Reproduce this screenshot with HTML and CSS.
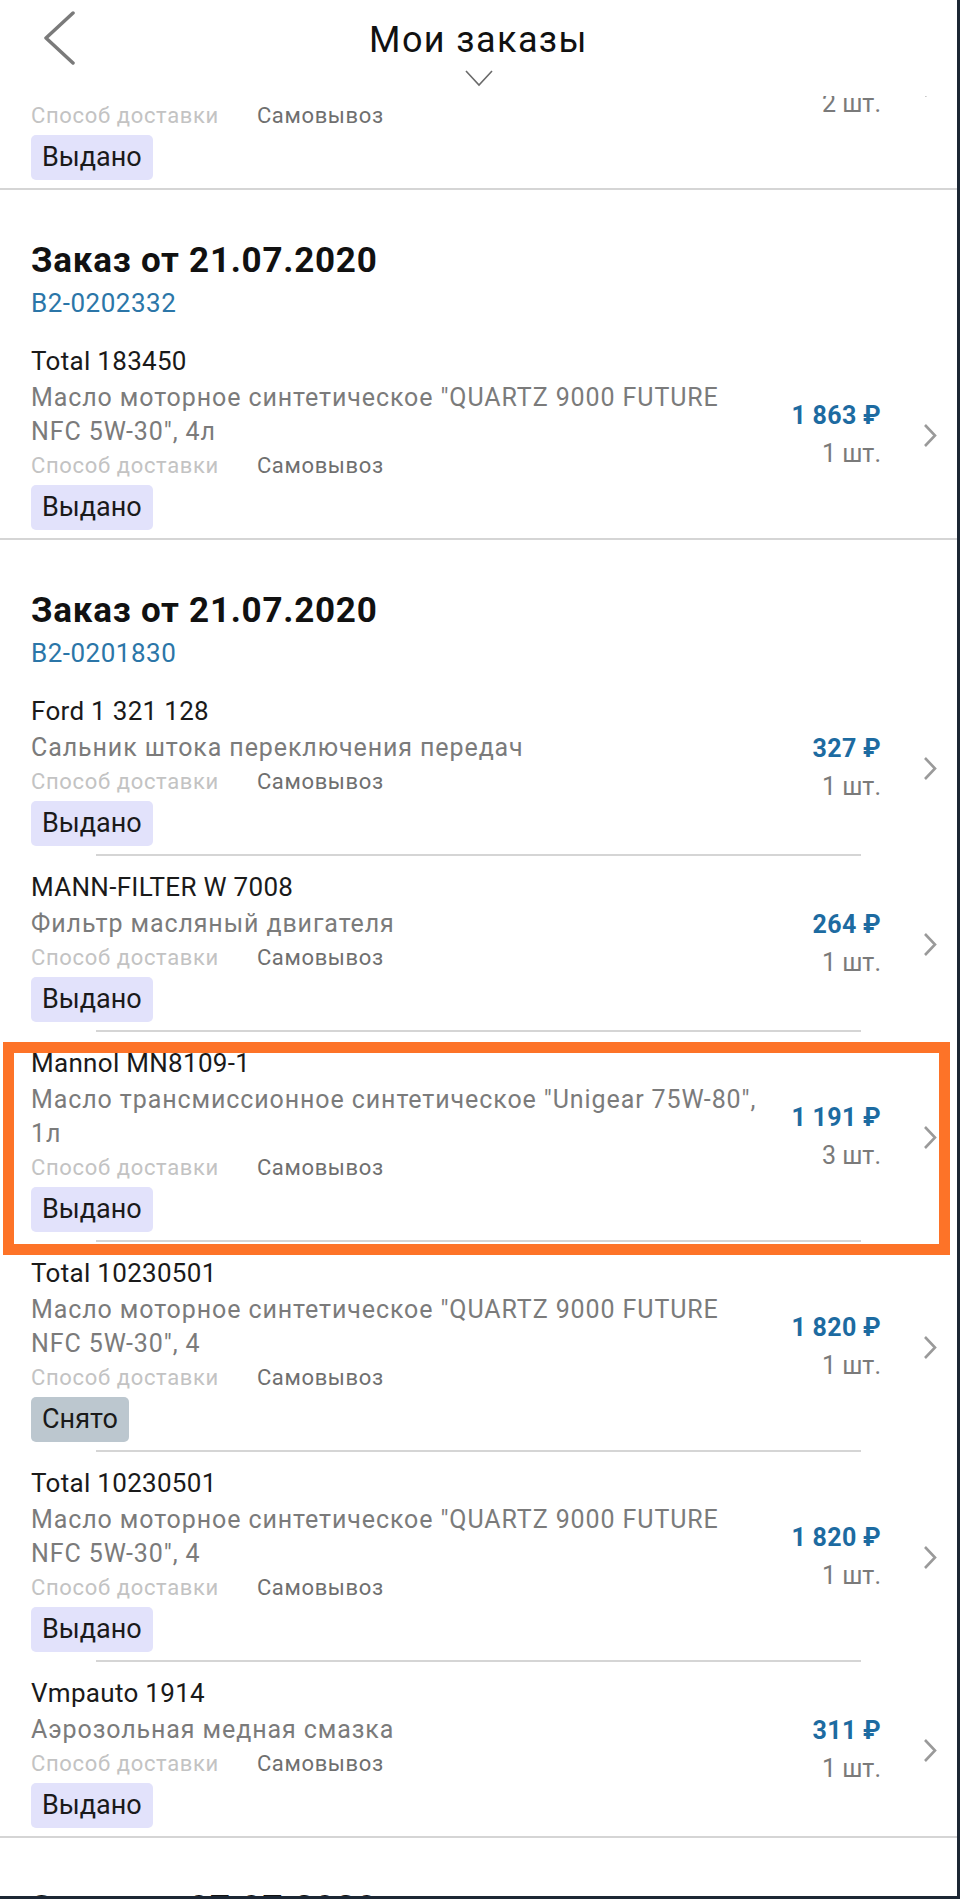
FILE: index.html
```html
<!DOCTYPE html>
<html lang="ru">
<head>
<meta charset="UTF-8">
<title>Мои заказы</title>
<link rel="stylesheet" href="styles.css">
</head>
<body>
<div class="screen">

<header class="topbar">
  <svg class="back" width="31" height="54" viewBox="0 0 31 54"><path d="M29 2 L2 27 L29 52" fill="none" stroke="#7a7a7a" stroke-width="3.5" stroke-linecap="round" stroke-linejoin="round"/></svg>
  <div class="topbar-center">
    <div class="title">Мои заказы</div>
    <svg class="expand" width="30" height="18" viewBox="0 0 30 18"><path d="M2 2 L15 16 L28 2" fill="none" stroke="#6a6a6a" stroke-width="1.6"/></svg>
  </div>
  <div></div>
</header>

<main class="list">
<div class="list-scroll">

<!-- list is scrolled: the top of this order is out of view -->
<section class="order order-cut">
  <div class="item">
    <div class="item-main">
      <div class="item-name">Total 10230501</div>
      <div class="item-desc">Масло моторное синтетическое "QUARTZ 9000 FUTURE NFC 5W-30", 4</div>
      <div class="delivery"><span class="delivery-label">Способ доставки</span><span class="delivery-value">Самовывоз</span></div>
      <span class="badge">Выдано</span>
    </div>
    <div class="item-side">
      <div class="price">3 640 ₽</div>
      <div class="qty">2 шт.</div>
    </div>
    <svg class="chev" width="14" height="25" viewBox="0 0 14 25"><path d="M2 2 L12 12.5 L2 23" fill="none" stroke="#9a9a9a" stroke-width="2.6"/></svg>
  </div>
</section>

<section class="order">
  <h2 class="order-title">Заказ от 21.07.2020</h2>
  <div class="order-num">B2-0202332</div>
  <div class="item">
    <div class="item-main">
      <div class="item-name">Total 183450</div>
      <div class="item-desc">Масло моторное синтетическое "QUARTZ 9000 FUTURE NFC 5W-30", 4л</div>
      <div class="delivery"><span class="delivery-label">Способ доставки</span><span class="delivery-value">Самовывоз</span></div>
      <span class="badge">Выдано</span>
    </div>
    <div class="item-side">
      <div class="price">1 863 ₽</div>
      <div class="qty">1 шт.</div>
    </div>
    <svg class="chev" width="14" height="25" viewBox="0 0 14 25"><path d="M2 2 L12 12.5 L2 23" fill="none" stroke="#9a9a9a" stroke-width="2.6"/></svg>
  </div>
</section>

<section class="order">
  <h2 class="order-title">Заказ от 21.07.2020</h2>
  <div class="order-num">B2-0201830</div>

  <div class="item">
    <div class="item-main">
      <div class="item-name">Ford 1 321 128</div>
      <div class="item-desc">Сальник штока переключения передач</div>
      <div class="delivery"><span class="delivery-label">Способ доставки</span><span class="delivery-value">Самовывоз</span></div>
      <span class="badge">Выдано</span>
    </div>
    <div class="item-side">
      <div class="price">327 ₽</div>
      <div class="qty">1 шт.</div>
    </div>
    <svg class="chev" width="14" height="25" viewBox="0 0 14 25"><path d="M2 2 L12 12.5 L2 23" fill="none" stroke="#9a9a9a" stroke-width="2.6"/></svg>
  </div>
  <hr class="divider">

  <div class="item">
    <div class="item-main">
      <div class="item-name">MANN-FILTER W 7008</div>
      <div class="item-desc">Фильтр масляный двигателя</div>
      <div class="delivery"><span class="delivery-label">Способ доставки</span><span class="delivery-value">Самовывоз</span></div>
      <span class="badge">Выдано</span>
    </div>
    <div class="item-side">
      <div class="price">264 ₽</div>
      <div class="qty">1 шт.</div>
    </div>
    <svg class="chev" width="14" height="25" viewBox="0 0 14 25"><path d="M2 2 L12 12.5 L2 23" fill="none" stroke="#9a9a9a" stroke-width="2.6"/></svg>
  </div>
  <hr class="divider">

  <div class="item marked">
    <div class="item-main">
      <div class="item-name">Mannol MN8109-1</div>
      <div class="item-desc">Масло трансмиссионное синтетическое "Unigear 75W-80", 1л</div>
      <div class="delivery"><span class="delivery-label">Способ доставки</span><span class="delivery-value">Самовывоз</span></div>
      <span class="badge">Выдано</span>
    </div>
    <div class="item-side">
      <div class="price">1 191 ₽</div>
      <div class="qty">3 шт.</div>
    </div>
    <svg class="chev" width="14" height="25" viewBox="0 0 14 25"><path d="M2 2 L12 12.5 L2 23" fill="none" stroke="#9a9a9a" stroke-width="2.6"/></svg>
  </div>
  <hr class="divider">

  <div class="item">
    <div class="item-main">
      <div class="item-name">Total 10230501</div>
      <div class="item-desc">Масло моторное синтетическое "QUARTZ 9000 FUTURE NFC 5W-30", 4</div>
      <div class="delivery"><span class="delivery-label">Способ доставки</span><span class="delivery-value">Самовывоз</span></div>
      <span class="badge badge-off">Снято</span>
    </div>
    <div class="item-side">
      <div class="price">1 820 ₽</div>
      <div class="qty">1 шт.</div>
    </div>
    <svg class="chev" width="14" height="25" viewBox="0 0 14 25"><path d="M2 2 L12 12.5 L2 23" fill="none" stroke="#9a9a9a" stroke-width="2.6"/></svg>
  </div>
  <hr class="divider">

  <div class="item">
    <div class="item-main">
      <div class="item-name">Total 10230501</div>
      <div class="item-desc">Масло моторное синтетическое "QUARTZ 9000 FUTURE NFC 5W-30", 4</div>
      <div class="delivery"><span class="delivery-label">Способ доставки</span><span class="delivery-value">Самовывоз</span></div>
      <span class="badge">Выдано</span>
    </div>
    <div class="item-side">
      <div class="price">1 820 ₽</div>
      <div class="qty">1 шт.</div>
    </div>
    <svg class="chev" width="14" height="25" viewBox="0 0 14 25"><path d="M2 2 L12 12.5 L2 23" fill="none" stroke="#9a9a9a" stroke-width="2.6"/></svg>
  </div>
  <hr class="divider">

  <div class="item">
    <div class="item-main">
      <div class="item-name">Vmpauto 1914</div>
      <div class="item-desc">Аэрозольная медная смазка</div>
      <div class="delivery"><span class="delivery-label">Способ доставки</span><span class="delivery-value">Самовывоз</span></div>
      <span class="badge">Выдано</span>
    </div>
    <div class="item-side">
      <div class="price">311 ₽</div>
      <div class="qty">1 шт.</div>
    </div>
    <svg class="chev" width="14" height="25" viewBox="0 0 14 25"><path d="M2 2 L12 12.5 L2 23" fill="none" stroke="#9a9a9a" stroke-width="2.6"/></svg>
  </div>
</section>

<section class="order">
  <h2 class="order-title">Заказ от 07.07.2020</h2>
  <div class="order-num">B2-0199412</div>
</section>

</div>
</main>
</div>
</body>
</html>
```

FILE: styles.css
```css
*{box-sizing:border-box;}
body{margin:0;background:#fff;font-family:Roboto,"Noto Sans",Arial,sans-serif;color:#1a1a1a;}
.screen{display:flex;flex-direction:column;width:960px;height:1899px;overflow:hidden;background:#fff;border-right:3px solid #1c2734;border-bottom:3px solid #1c2734;}

.topbar{flex:none;height:96px;background:#fff;display:grid;grid-template-columns:1fr auto 1fr;align-items:start;padding-top:11px;}
.back{margin-left:44px;}
.topbar-center{display:flex;flex-direction:column;align-items:center;}
.title{font-size:36px;line-height:44px;margin-top:7px;letter-spacing:1.4px;color:#111;}
.expand{display:block;margin-top:7px;}

/* scrolled list: the top part of the first order is out of view */
.list{flex:1;min-height:0;overflow:hidden;}
.list-scroll{margin-top:-116px;}
.order{border-bottom:2px solid #d5d5d5;padding-top:50px;}
.order-cut{padding-top:0;}
.order-title{margin:0;font-size:35px;line-height:42px;font-weight:700;letter-spacing:0.75px;padding-left:31px;color:#111;}
.order-num{margin-top:5px;margin-bottom:11px;font-size:26px;line-height:32px;letter-spacing:0.5px;padding-left:31px;color:#2b76a8;}

.item{display:flex;align-items:center;padding:11px 20px 8px 31px;}
.item-main{flex:1;min-width:0;padding-right:23px;}
.item-name{font-size:26px;line-height:40px;letter-spacing:0.3px;color:#1a1a1a;}
.item-desc{font-size:25px;line-height:34px;letter-spacing:0.9px;color:#7b7b7b;}
.delivery{display:flex;gap:38px;font-size:22px;line-height:34px;letter-spacing:0.65px;}
.delivery-label{color:#c3c3c3;}
.delivery-value{color:#6f6f6f;}
.badge{display:inline-block;margin-top:2px;height:45px;line-height:45px;padding:0 11px;font-size:27px;background:#e2e2fb;border-radius:5px;color:#1a1a1a;}
.badge-off{background:#bcc7cf;}

.item-side{width:100px;text-align:right;}
.price{font-size:25px;line-height:34px;font-weight:700;letter-spacing:0.3px;color:#1d6ba1;}
.qty{margin-top:2px;font-size:25px;line-height:38px;color:#7a7a7a;}
.chev{flex:none;margin-left:42px;}

.divider{margin:0 10%;border:none;height:2px;background:#d5d5d5;}

/* orange frame drawn over the selected row */
.marked{position:relative;}
.marked::after{content:"";position:absolute;left:3px;top:10px;right:7px;bottom:-15px;border:11px solid #fd7328;pointer-events:none;}
```
